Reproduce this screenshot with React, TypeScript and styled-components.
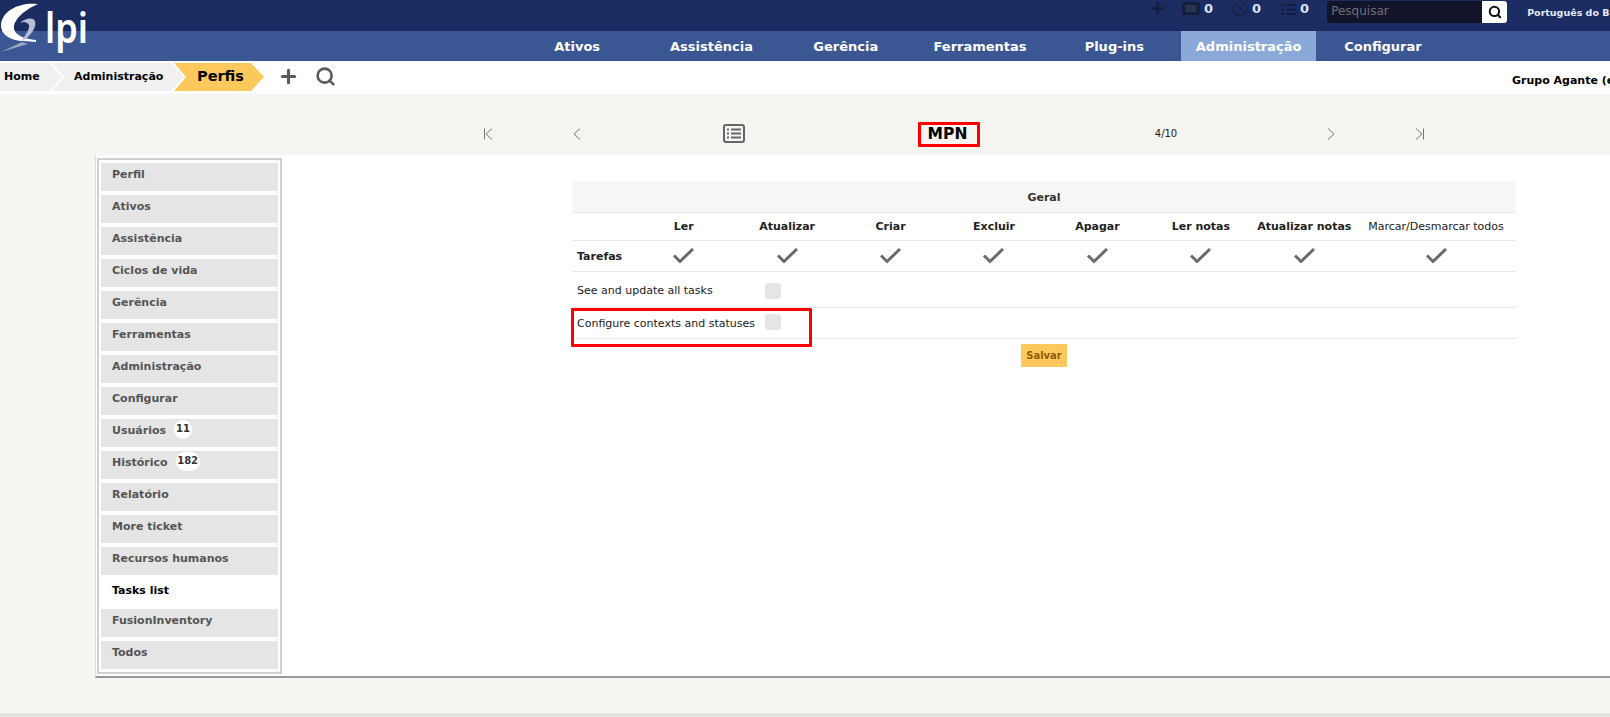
import styled, { createGlobalStyle } from 'styled-components';
import { Clock, Plus, Search } from 'lucide-react';

const GlobalStyle = createGlobalStyle`
  html, body {
    margin: 0;
    padding: 0;
  }
  body {
    font-family: "DejaVu Sans", Verdana, sans-serif;
    font-size: 11px;
    color: #222;
  }
`;

const Page = styled.div`
  position: relative;
  width: 1610px;
  height: 717px;
  display: flex;
  flex-direction: column;
  overflow: hidden;
  background: #f6f5f1;
`;

const TopBar = styled.div`
  height: 31px;
  flex: none;
  display: flex;
  align-items: flex-start;
  padding-left: 1149px;
  background: #1b2c62;
  white-space: nowrap;
`;

const Counter = styled.div<{ $gap?: number }>`
  display: flex;
  align-items: center;
  gap: 4px;
  height: 17px;
  margin-right: ${(p) => p.$gap ?? 19}px;
  color: #d8e4fb;
  font-size: 13px;
  font-weight: bold;
`;

const SearchBox = styled.div`
  flex: none;
  display: flex;
  width: 180px;
  height: 22px;
  margin: 1px 0 0 -1px;
  border-radius: 3px;
  overflow: hidden;
  background: #12142b;
`;

const SearchText = styled.div`
  flex: 1;
  padding: 3px 0 0 4px;
  color: #6f7077;
  font-size: 12px;
`;

const SearchButton = styled.div`
  width: 25px;
  display: flex;
  align-items: center;
  justify-content: center;
  background: #fff;
  color: #111;
`;

const Lang = styled.div`
  flex: none;
  margin: 7px 0 0 20px;
  color: #e3e9f6;
  font-size: 9.5px;
  font-weight: bold;
`;

const MainNav = styled.nav`
  height: 30px;
  flex: none;
  display: flex;
  padding-left: 510px;
  background: #3a5693;
`;

const NavItem = styled.div<{ $active?: boolean }>`
  width: 134.3px;
  flex: none;
  display: flex;
  align-items: center;
  justify-content: center;
  color: #fff;
  font-size: 13px;
  font-weight: bold;
  background: ${(p) => (p.$active ? '#8aa9d9' : 'transparent')};
`;

const Logo = styled.svg`
  position: absolute;
  left: 0;
  top: 0;
`;

const CrumbBar = styled.div`
  height: 33px;
  flex: none;
  display: flex;
  align-items: flex-start;
  padding-top: 2px;
  box-sizing: border-box;
  background: #fff;
  white-space: nowrap;
`;

const Crumb = styled.div<{ $w: number; $current?: boolean; $first?: boolean }>`
  box-sizing: border-box;
  flex: none;
  width: ${(p) => p.$w}px;
  height: 28px;
  display: flex;
  align-items: center;
  margin-left: ${(p) => (p.$first ? 0 : -10)}px;
  padding-left: ${(p) => (p.$first ? 4 : p.$current ? 23 : 22)}px;
  padding-bottom: 2px;
  color: #000;
  font-size: ${(p) => (p.$current ? 14.5 : 11)}px;
  font-weight: bold;
  background: ${(p) => (p.$current ? '#fec95c' : '#f0f0f0')};
  clip-path: ${(p) =>
    p.$first
      ? 'polygon(0 0, calc(100% - 13px) 0, 100% 50%, calc(100% - 13px) 100%, 0 100%)'
      : 'polygon(0 0, calc(100% - 13px) 0, 100% 50%, calc(100% - 13px) 100%, 0 100%, 12px 50%)'};
`;

const CrumbTool = styled.div<{ $left: number }>`
  flex: none;
  display: flex;
  margin-left: ${(p) => p.$left}px;
  margin-top: 3px;
  color: #5a5a5a;
`;

const Entity = styled.div`
  flex: none;
  margin: 11px 0 0 1176px;
  color: #000;
  font-size: 11px;
  font-weight: bold;
`;

const Pager = styled.div`
  height: 61px;
  flex: none;
  display: grid;
  grid-template-columns: 88px 90px 224px 206px 228px 102px 74px;
  align-items: center;
  padding: 18px 0 0 444px;
  box-sizing: border-box;
  justify-items: center;
  color: #777;
`;

const RecordName = styled.div`
  box-sizing: border-box;
  width: 62px;
  height: 25px;
  margin-top: 2px;
  border: 3px solid #f00;
  border-radius: 1px;
  padding-right: 3px;
  color: #000;
  font-size: 15.5px;
  font-weight: bold;
  line-height: 19px;
  text-align: center;
`;

const PageCount = styled.div`
  color: #222;
  font-size: 10px;
`;

const Content = styled.div`
  box-sizing: border-box;
  height: 523px;
  flex: none;
  display: flex;
  align-items: flex-start;
  margin-left: 95px;
  padding: 3px 0 0 1px;
  border-left: 1px solid #ddd;
  border-bottom: 2px solid #999;
  background: #fff;
`;

const Tabs = styled.ul`
  box-sizing: border-box;
  flex: none;
  width: 185px;
  height: 516px;
  display: flex;
  flex-direction: column;
  gap: 4px;
  margin: 0;
  padding: 3px 2px;
  border: 2px solid #d0d0d0;
  list-style: none;
`;

const Tab = styled.li<{ $active?: boolean }>`
  box-sizing: border-box;
  flex: none;
  height: ${(p) => (p.$active ? 34 : 28)}px;
  margin: ${(p) => (p.$active ? '-4px 0' : 0)};
  padding: ${(p) => (p.$active ? '9px' : '5px')} 0 0 11px;
  color: ${(p) => (p.$active ? '#000' : '#555')};
  font-size: 11px;
  font-weight: bold;
  line-height: 14px;
  background: ${(p) => (p.$active ? '#fff' : '#e5e5e5')};
`;

const Badge = styled.span<{ $w: number }>`
  display: inline-block;
  box-sizing: border-box;
  width: ${(p) => p.$w}px;
  height: 19px;
  margin-left: 8px;
  position: relative;
  top: -4px;
  vertical-align: top;
  border-radius: 10px;
  background: #fff;
  color: #333;
  font-size: 10px;
  line-height: 17px;
  text-align: center;
`;

const Panel = styled.div`
  position: relative;
  flex: none;
  width: 944px;
  margin: 23px 0 0 290px;
`;

const GeneralHeader = styled.div`
  box-sizing: border-box;
  height: 32px;
  border-bottom: 1px solid #e8e8e8;
  background: #f6f6f6;
  color: #333;
  font-weight: bold;
  line-height: 33px;
  text-align: center;
`;

const RightsRow = styled.div<{ $h: number }>`
  box-sizing: border-box;
  height: ${(p) => p.$h}px;
  display: grid;
  grid-template-columns: 60px repeat(7, 1fr) 160px;
  align-items: center;
  justify-items: center;
  border-bottom: 1px solid #e8e8e8;
`;

const ColumnTitle = styled.div<{ $plain?: boolean }>`
  color: #222;
  font-weight: ${(p) => (p.$plain ? 'normal' : 'bold')};
  white-space: nowrap;
`;

const RowTitle = styled.div`
  justify-self: start;
  padding-left: 5px;
  color: #222;
  font-weight: bold;
`;

const OptionRow = styled.div<{ $h: number; $top: number }>`
  box-sizing: border-box;
  height: ${(p) => p.$h}px;
  display: flex;
  align-items: flex-start;
  padding-top: ${(p) => p.$top}px;
  border-bottom: 1px solid #e8e8e8;
`;

const OptionLabel = styled.div<{ $nudge: number }>`
  width: 188px;
  padding-left: 5px;
  margin-top: ${(p) => p.$nudge}px;
  color: #222;
  line-height: 14px;
  white-space: nowrap;
`;

const FakeCheckbox = styled.div`
  width: 16px;
  height: 16px;
  border-radius: 3px;
  background: #e5e5e5;
`;

const Highlight = styled.div`
  position: absolute;
  left: -1px;
  top: 127px;
  box-sizing: border-box;
  width: 241px;
  height: 39px;
  border: 3px solid #f00;
  border-radius: 1px;
`;

const Actions = styled.div`
  display: flex;
  justify-content: center;
  padding-top: 5px;
`;

const SaveButton = styled.button`
  width: 46px;
  height: 23px;
  padding: 0;
  border: 0;
  background: #fec95c;
  color: #8f5a0a;
  font-family: "DejaVu Sans", Verdana, sans-serif;
  font-size: 10px;
  font-weight: bold;
`;

const FooterGap = styled.div`
  flex: 1;
`;

const FooterBand = styled.div`
  height: 4px;
  flex: none;
  background: #e4e3dd;
`;

const Ticket = () => (
  <svg width="18" height="13" viewBox="0 0 18 13">
    <rect x="0" y="0" width="18" height="13" rx="2" fill="#141d40" />
    <rect x="3.5" y="3" width="11" height="7" fill="#2a3350" />
  </svg>
);

const Tasks = () => (
  <svg width="16" height="14" viewBox="0 0 16 14" fill="none" stroke="#141d40" strokeWidth="2">
    <path d="M0.5 2.5 L2 4 L4.5 0.5" strokeWidth="1.2" />
    <path d="M6 3 H16 M6 7.5 H16 M6 12 H16 M1 7.5 H4 M1 12 H4" />
  </svg>
);

const Check = () => (
  <svg width="21" height="16" viewBox="0 0 21 16" fill="none" stroke="#6a6a6a" strokeWidth="3">
    <polyline points="1,7.5 7,13.5 20,1" />
  </svg>
);

const First = () => (
  <svg width="11" height="12" viewBox="0 0 11 12" fill="none" stroke="#777" strokeWidth="1">
    <path d="M1.5 0.5 V11.5 M9 0.5 L3 6 L9 11.5" />
  </svg>
);

const Prev = () => (
  <svg width="8" height="12" viewBox="0 0 8 12" fill="none" stroke="#777" strokeWidth="1">
    <path d="M7 0.5 L1 6 L7 11.5" />
  </svg>
);

const Next = () => (
  <svg width="8" height="12" viewBox="0 0 8 12" fill="none" stroke="#777" strokeWidth="1">
    <path d="M1 0.5 L7 6 L1 11.5" />
  </svg>
);

const Last = () => (
  <svg width="11" height="12" viewBox="0 0 11 12" fill="none" stroke="#777" strokeWidth="1">
    <path d="M9.5 0.5 V11.5 M2 0.5 L8 6 L2 11.5" />
  </svg>
);

const ListIcon = () => (
  <svg width="22" height="19" viewBox="0 0 22 19" fill="none" stroke="#666">
    <rect x="1" y="1" width="20" height="17" rx="2" strokeWidth="2" />
    <path d="M8 5.5 H18 M8 9.5 H18 M8 13.5 H18" strokeWidth="2" />
    <path d="M4 5.5 H6 M4 9.5 H6 M4 13.5 H6" strokeWidth="2" />
  </svg>
);

const tabs = [
  'Perfil',
  'Ativos',
  'Assistência',
  'Ciclos de vida',
  'Gerência',
  'Ferramentas',
  'Administração',
  'Configurar',
];

const tabsAfter = ['Relatório', 'More ticket', 'Recursos humanos'];

const columns = ['Ler', 'Atualizar', 'Criar', 'Excluir', 'Apagar', 'Ler notas', 'Atualizar notas'];

const navItems = ['Ativos', 'Assistência', 'Gerência', 'Ferramentas', 'Plug-ins', 'Administração', 'Configurar'];

export default function App() {
  return (
    <Page>
      <GlobalStyle />
      <TopBar>
        <Counter $gap={16}>
          <Plus size={17} color="#141d40" strokeWidth={3.5} />
        </Counter>
        <Counter>
          <Ticket />0
        </Counter>
        <Counter>
          <Clock size={16} color="#141d40" strokeWidth={1.6} />0
        </Counter>
        <Counter>
          <Tasks />0
        </Counter>
        <SearchBox>
          <SearchText>Pesquisar</SearchText>
          <SearchButton>
            <Search size={14} strokeWidth={3.5} />
          </SearchButton>
        </SearchBox>
        <Lang>Português do Brasil</Lang>
      </TopBar>
      <MainNav>
        {navItems.map((item) => (
          <NavItem key={item} $active={item === 'Administração'}>
            {item}
          </NavItem>
        ))}
      </MainNav>
      <Logo width="100" height="60" viewBox="0 0 100 60">
        <path
          d="M38 4 C20 2 3 10 1 24 C0 34 10 41 24 41 L36 42 L36 40 C25 39 16 36 14 29 C13 20 24 10 38 4 Z"
          fill="#fff"
        />
        <path
          d="M20 23 C25 18 33 17 35 21 C37 27 31 34 27 38 L22 41 C25 35 30 29 29 25 C27 22 24 21 20 23 Z"
          fill="#b4bdd2"
        />
        <path d="M22 42 L1 52 L28 44 Z" fill="#9aa6c4" />
        <text
          x="45"
          y="43"
          fill="#fff"
          fontFamily='"Noto Sans", sans-serif'
          fontSize="41"
          fontWeight="600"
          textLength="43"
          lengthAdjust="spacingAndGlyphs"
        >
          lpi
        </text>
      </Logo>
      <CrumbBar>
        <Crumb $first $w={62}>
          Home
        </Crumb>
        <Crumb $w={132}>Administração</Crumb>
        <Crumb $current $w={90}>
          Perfis
        </Crumb>
        <CrumbTool $left={14}>
          <Plus size={21} strokeWidth={3.5} />
        </CrumbTool>
        <CrumbTool $left={16}>
          <Search size={21} strokeWidth={3} />
        </CrumbTool>
        <Entity>Grupo Agante (entidade raiz)</Entity>
      </CrumbBar>
      <Pager>
        <First />
        <Prev />
        <ListIcon />
        <RecordName>MPN</RecordName>
        <PageCount>4/10</PageCount>
        <Next />
        <Last />
      </Pager>
      <Content>
        <Tabs>
          {tabs.map((tab) => (
            <Tab key={tab}>{tab}</Tab>
          ))}
          <Tab>
            Usuários<Badge $w={18}>11</Badge>
          </Tab>
          <Tab>
            Histórico<Badge $w={24}>182</Badge>
          </Tab>
          {tabsAfter.map((tab) => (
            <Tab key={tab}>{tab}</Tab>
          ))}
          <Tab $active>Tasks list</Tab>
          <Tab>FusionInventory</Tab>
          <Tab>Todos</Tab>
        </Tabs>
        <Panel>
          <GeneralHeader>Geral</GeneralHeader>
          <RightsRow $h={28}>
            <span />
            {columns.map((col) => (
              <ColumnTitle key={col}>{col}</ColumnTitle>
            ))}
            <ColumnTitle $plain>Marcar/Desmarcar todos</ColumnTitle>
          </RightsRow>
          <RightsRow $h={31}>
            <RowTitle>Tarefas</RowTitle>
            {columns.map((col) => (
              <Check key={col} />
            ))}
            <Check />
          </RightsRow>
          <OptionRow $h={36} $top={11}>
            <OptionLabel $nudge={1}>See and update all tasks</OptionLabel>
            <FakeCheckbox />
          </OptionRow>
          <OptionRow $h={31} $top={6}>
            <OptionLabel $nudge={3}>Configure contexts and statuses</OptionLabel>
            <FakeCheckbox />
          </OptionRow>
          <Highlight />
          <Actions>
            <SaveButton>Salvar</SaveButton>
          </Actions>
        </Panel>
      </Content>
      <FooterGap />
      <FooterBand />
    </Page>
  );
}
